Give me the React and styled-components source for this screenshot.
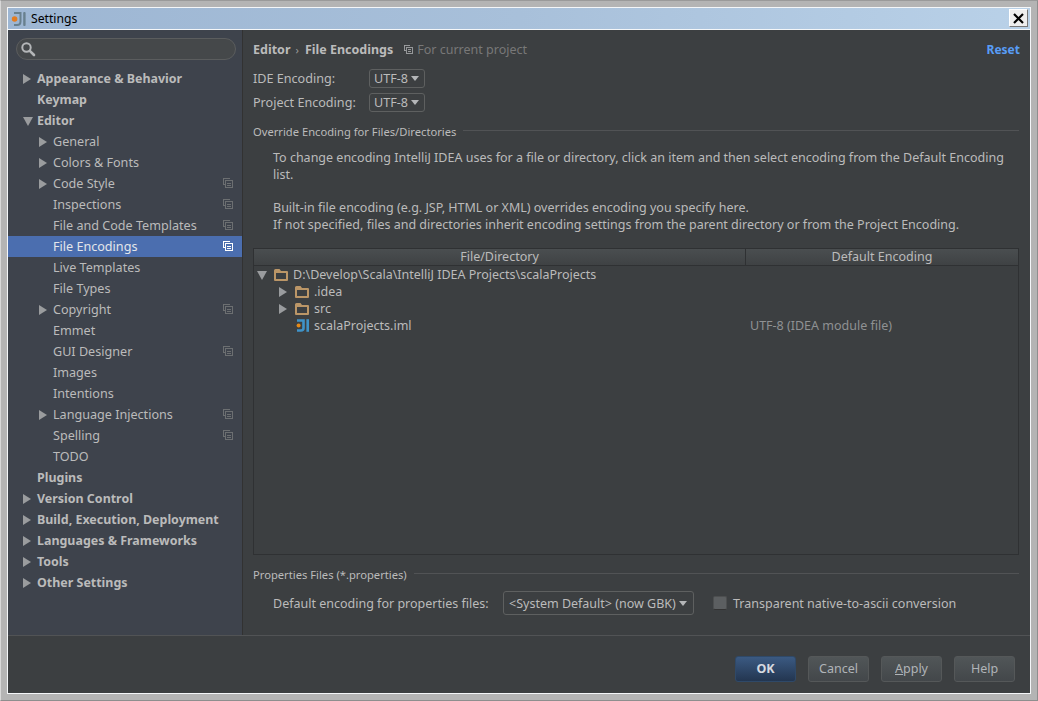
import React from "react";
import styled, { createGlobalStyle } from "styled-components";

const Global = createGlobalStyle`
  html, body { margin: 0; padding: 0; background: #b4b4b4; }
  * { box-sizing: border-box; }
  body { font-family: "Noto Sans", "Open Sans", sans-serif; font-size: 12.5px; color: #bbbbbb; }
`;

const Frame = styled.div`
  width: 1038px; height: 701px; padding: 6px;
  background: #b4b4b4; border: 1px solid #8e8e8e; border-left-color: #d8d8d8; border-top-color: #9a9a9a;
`;
const Win = styled.div`
  width: 1024px; height: 687px; border: 1px solid #f4f6f8; display: flex; flex-direction: column; background: #3c3f41;
`;
const TitleBar = styled.div`
  height: 22px; flex: none; display: flex; align-items: center; padding: 0 2px 0 3px; gap: 4px;
  background: linear-gradient(90deg, #9db6d3 0%, #a8c0da 50%, #b9d1e8 100%);
  border-bottom: 1px solid #f4f6f8; color: #000; font-size: 12.2px;
`;
const TitleText = styled.span` flex: 1; line-height: 20px; `;
const CloseBtn = styled.div`
  width: 19px; height: 18px; background: #eeeeee; border: 1px solid #fff; border-right-color: #777; border-bottom-color: #777;
  display: flex; align-items: center; justify-content: center; margin-top: -1px;
`;
const Body = styled.div` flex: 1; display: flex; min-height: 0; `;
const Sidebar = styled.div`
  width: 235px; flex: none; background: #3e434c; border-right: 1px solid #323232; padding-top: 8px;
`;
const Search = styled.div`
  margin: 0 6px 8px 8px; height: 22px; border: 1px solid #5b5d5e; border-radius: 11px; background: #45484a;
  display: flex; align-items: center; padding-left: 3px;
`;
const Row = styled.div`
  height: 21px; display: flex; align-items: center; position: relative;
  padding-left: ${p => (p.$sub ? 45 : 29)}px;
  font-weight: ${p => (p.$sub ? 400 : 700)};
  font-size: ${p => (p.$sub ? 12.6 : 12.45)}px;
  color: ${p => (p.$sel ? "#e4e6ea" : "#bbbbbb")};
  background: ${p => (p.$sel ? "#4b6eaf" : "transparent")};
  white-space: nowrap;
`;
const Arrow = styled.span`
  position: absolute; top: 50%; left: ${p => p.$x}px;
  ${p => p.$down
    ? `margin-top:-4px; border-left:5px solid transparent; border-right:5px solid transparent; border-top:9px solid #9a9c9e;`
    : `margin-top:-5px; border-top:5px solid transparent; border-bottom:5px solid transparent; border-left:8px solid #9a9c9e;`}
`;
const RowCopy = styled.span` position: absolute; right: 9px; top: 5px; display: flex; `;
const Main = styled.div` flex: 1; display: flex; flex-direction: column; min-width: 0; `;
const Content = styled.div` flex: 1; padding: 0 11px 0 10px; min-height: 0; display: flex; flex-direction: column; `;
const Crumbs = styled.div`
  height: 38px; flex: none; display: flex; align-items: center; font-size: 12.5px;
`;
const CrumbB = styled.b` font-weight: 700; color: #bbbbbb; `;
const CrumbSep = styled.span` margin: 0 6px 0 5px; color: #9a9a9a; font-size: 11px; `;
const ForProject = styled.span` display: inline-flex; align-items: center; gap: 4px; margin-left: 11px; color: #787878; font-size: 12.5px; `;
const Reset = styled.a` margin-left: auto; margin-right: -1px; color: #589df6; font-weight: 700; font-size: 12px; `;
const FieldRow = styled.div` display: flex; align-items: center; height: 20px; margin-bottom: 4px; font-size: 12.6px; `;
const FieldLabel = styled.span` width: 116px; flex: none; `;
const Combo = styled.div`
  border: 1px solid #5e6060; border-radius: 3px; display: inline-flex; align-items: center; gap: 3px;
  padding: 0 2px 0 ${p => p.$pl || 4}px; background: #3c3f41; font-size: ${p => p.$fs || 12.6}px; color: #bbbbbb; white-space: nowrap;
  width: ${p => p.$w}px; height: ${p => p.$h || 19}px;
`;
const ComboTri = styled.span` border-left: 4.5px solid transparent; border-right: 4.5px solid transparent; border-top: 5px solid #b4b6b8; `;
const Section = styled.div` display: flex; align-items: center; gap: 7px; height: 18px; padding-bottom: 2px; font-size: 11.2px; white-space: nowrap; color: #bbbbbb; margin-top: ${p => p.$mt || 0}px; `;
const Rule = styled.div` flex: 1; height: 1px; background: #515355; margin-bottom: 1px; `;
const Notes = styled.div` padding: 8px 0 0 20px; font-size: 12.5px; line-height: 17px; color: #bbbbbb; height: 107px; flex: none; `;
const Gap = styled.div` height: 16px; `;
const Table = styled.div` height: 307px; flex: none; border: 1px solid #2f3133; display: flex; flex-direction: column; `;
const THead = styled.div`
  height: 17px; flex: none; display: flex; background: linear-gradient(#4a4e50, #3f4244); border-bottom: 1px solid #2f3133; font-size: 12.5px;
`;
const Th = styled.div`
  width: ${p => p.$w}px; text-align: center; line-height: 16px; color: #bbbbbb;
  ${p => p.$bar ? "border-right: 1px solid #2f3133;" : ""} flex: ${p => p.$w ? "none" : 1};
`;
const TRow = styled.div` height: 17px; display: flex; align-items: center; position: relative; padding-left: ${p => p.$x}px; gap: ${p => p.$g || 5}px; font-size: 12.5px; color: #bbbbbb; white-space: nowrap; `;
const TreeArrow = styled.span`
  position: absolute; left: ${p => p.$x}px; top: 50%;
  ${p => p.$down
    ? `margin-top:-4px; border-left:5px solid transparent; border-right:5px solid transparent; border-top:9px solid #9a9c9e;`
    : `margin-top:-5px; border-top:5px solid transparent; border-bottom:5px solid transparent; border-left:8px solid #9a9c9e;`}
`;
const EncCell = styled.span` position: absolute; left: 496px; color: #8f9193; `;
const PropRow = styled.div` display: flex; align-items: center; padding: 7px 0 0 20px; font-size: 12.5px; `;
const PropLabel = styled.span` width: 230px; flex: none; `;
const Check = styled.span` width: 14px; height: 14px; margin: 0 6px 0 19px; background: #5c5f61; border: 1px solid #4d4f50; border-bottom-color: #333; border-radius: 2px; flex: none; `;
const Footer = styled.div`
  height: 58px; flex: none; border-top: 1px solid #515355; display: flex; align-items: flex-start; justify-content: flex-end; gap: 12px;
  padding: 20px 15px 0 0; background: #3c3f41;
`;
const Btn = styled.div`
  width: 61px; height: 26px; border-radius: 3px; display: flex; align-items: center; justify-content: center; font-size: 12.5px; padding-bottom: 2px;
  border: 1px solid ${p => p.$pri ? "#2f4968" : "#555859"};
  background: ${p => p.$pri ? "linear-gradient(#3b5a82, #233650)" : "linear-gradient(#515658, #43474a)"};
  color: ${p => p.$pri ? "#d6dae0" : "#b0b4b8"}; font-weight: ${p => p.$pri ? 700 : 400};
`;
const U = styled.span` text-decoration: underline; `;

const Mag = () => (
  <svg width="16" height="16" viewBox="0 0 16 16"><circle cx="6.5" cy="6.5" r="4.2" fill="none" stroke="#b4b6b8" strokeWidth="2"/><path d="M9.8 9.8 14 14" stroke="#b4b6b8" strokeWidth="2.6" strokeLinecap="round"/></svg>
);
const Copy = ({ c = "#6c6f71", s = 10 }) => (
  <svg width={s} height={s} viewBox="0 0 10 10" fill="none" stroke={c} strokeWidth="1" shapeRendering="crispEdges">
    <path d="M6.5.5h-6v6h2"/><rect x="2.5" y="2.5" width="7" height="7"/><path d="M4 5h4M4 7h4"/>
  </svg>
);
const Folder = () => (
  <svg width="14" height="12" viewBox="0 0 14 12" style={{ flex: "none" }}>
    <path d="M0 1.5Q0 0 1.5 0H5.5L7 2H13Q14 2 14 3V11Q14 12 13 12H1Q0 12 0 11Z" fill="#bb9667"/>
    <rect x="2" y="4" width="10" height="6" fill="#3c3f41"/>
  </svg>
);
const IdeaIcon = () => (
  <svg width="14" height="13" viewBox="0 0 14 13" fill="none" style={{ flex: "none" }}>
    <path d="M1 1.5H7.5V9Q7.5 11.5 5 11.5H1" stroke="#3f93c8" strokeWidth="2.6"/>
    <rect x="10.4" y="0.2" width="2.6" height="12.6" fill="#3f93c8"/>
    <circle cx="2.6" cy="6.5" r="2" fill="#e58a18"/>
  </svg>
);
const TitleIcon = () => (
  <svg width="16" height="16" viewBox="0 0 16 16" fill="none" style={{ flex: "none" }}>
    <path d="M3 2H9.5V10.5Q9.5 14 6 14H3" stroke="#68808e" strokeWidth="2"/>
    <rect x="12.2" y="1" width="2.4" height="14" rx="1" fill="#68808e"/>
    <circle cx="3.6" cy="8" r="2.8" fill="#e27c22"/>
  </svg>
);
const CloseX = () => (
  <svg width="11" height="11" viewBox="0 0 11 11"><path d="M1 1 10 10M10 1 1 10" stroke="#000" strokeWidth="2.2"/></svg>
);

const items = [
  { t: "Appearance & Behavior", a: "r" },
  { t: "Keymap" },
  { t: "Editor", a: "d" },
  { t: "General", s: 1, a: "r" },
  { t: "Colors & Fonts", s: 1, a: "r" },
  { t: "Code Style", s: 1, a: "r", c: 1 },
  { t: "Inspections", s: 1, c: 1 },
  { t: "File and Code Templates", s: 1, c: 1 },
  { t: "File Encodings", s: 1, c: 1, sel: 1 },
  { t: "Live Templates", s: 1 },
  { t: "File Types", s: 1 },
  { t: "Copyright", s: 1, a: "r", c: 1 },
  { t: "Emmet", s: 1 },
  { t: "GUI Designer", s: 1, c: 1 },
  { t: "Images", s: 1 },
  { t: "Intentions", s: 1 },
  { t: "Language Injections", s: 1, a: "r", c: 1 },
  { t: "Spelling", s: 1, c: 1 },
  { t: "TODO", s: 1 },
  { t: "Plugins" },
  { t: "Version Control", a: "r" },
  { t: "Build, Execution, Deployment", a: "r" },
  { t: "Languages & Frameworks", a: "r" },
  { t: "Tools", a: "r" },
  { t: "Other Settings", a: "r" },
];

export default function App() {
  return (
    <Frame>
      <Global />
      <Win>
        <TitleBar>
          <TitleIcon />
          <TitleText>Settings</TitleText>
          <CloseBtn><CloseX /></CloseBtn>
        </TitleBar>
        <Body>
          <Sidebar>
            <Search><Mag /></Search>
            {items.map(it => (
              <Row key={it.t} $sub={it.s} $sel={it.sel}>
                {it.a && <Arrow $down={it.a === "d"} $x={it.s ? 31 : 15} />}
                {it.t}
                {it.c && <RowCopy><Copy c={it.sel ? "#ffffff" : "#6c6f71"} /></RowCopy>}
              </Row>
            ))}
          </Sidebar>
          <Main>
            <Content>
              <Crumbs>
                <CrumbB>Editor</CrumbB><CrumbSep>›</CrumbSep><CrumbB>File Encodings</CrumbB>
                <ForProject><Copy c="#a0a2a4" s={9} />For current project</ForProject>
                <Reset>Reset</Reset>
              </Crumbs>
              <FieldRow><FieldLabel>IDE Encoding:</FieldLabel><Combo $w={56}>UTF-8<ComboTri /></Combo></FieldRow>
              <FieldRow><FieldLabel>Project Encoding:</FieldLabel><Combo $w={56}>UTF-8<ComboTri /></Combo></FieldRow>
              <Section $mt={7}>Override Encoding for Files/Directories<Rule /></Section>
              <Notes>
                To change encoding IntelliJ IDEA uses for a file or directory, click an item and then select encoding from the Default Encoding<br />
                list.
                <Gap />
                Built-in file encoding (e.g. JSP, HTML or XML) overrides encoding you specify here.<br />
                If not specified, files and directories inherit encoding settings from the parent directory or from the Project Encoding.
              </Notes>
              <Table>
                <THead><Th $w={492} $bar>File/Directory</Th><Th>Default Encoding</Th></THead>
                <TRow $x={20}><TreeArrow $down $x={3} /><Folder />D:\Develop\Scala\IntelliJ IDEA Projects\scalaProjects</TRow>
                <TRow $x={41}><TreeArrow $x={25} /><Folder />.idea</TRow>
                <TRow $x={41}><TreeArrow $x={25} /><Folder />src</TRow>
                <TRow $x={42} $g={4}><IdeaIcon />scalaProjects.iml<EncCell>UTF-8 (IDEA module file)</EncCell></TRow>
              </Table>
              <Section $mt={11}>Properties Files (*.properties)<Rule /></Section>
              <PropRow>
                <PropLabel>Default encoding for properties files:</PropLabel>
                <Combo $w={191} $h={24} $pl={5} $fs={12.5}>{"<System Default> (now GBK)"}<ComboTri /></Combo>
                <Check />Transparent native-to-ascii conversion
              </PropRow>
            </Content>
          </Main>
        </Body>
        <Footer>
          <Btn $pri>OK</Btn>
          <Btn>Cancel</Btn>
          <Btn><span><U>A</U>pply</span></Btn>
          <Btn>Help</Btn>
        </Footer>
      </Win>
    </Frame>
  );
}
